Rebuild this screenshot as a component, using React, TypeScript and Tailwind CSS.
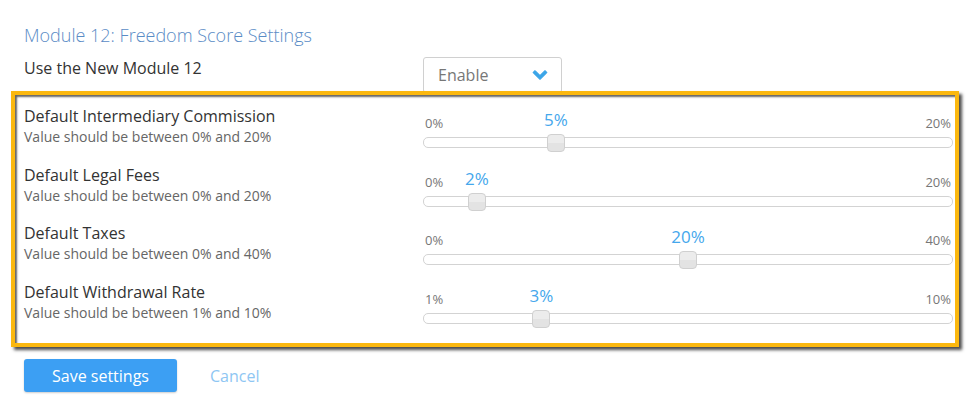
import React from "react";

type SliderRow = {
    label: string;
    min: number;
    max: number;
    value: number;
};

const rows: SliderRow[] = [
    { label: "Default Intermediary Commission", min: 0, max: 20, value: 5 },
    { label: "Default Legal Fees", min: 0, max: 20, value: 2 },
    { label: "Default Taxes", min: 0, max: 40, value: 20 },
    { label: "Default Withdrawal Rate", min: 1, max: 10, value: 3 },
];

function ChevronDown() {
    return (
        <svg width="14" height="10.5" viewBox="90 357 1612 1211" className="block overflow-visible">
            <path
                fill="#3ba5e8"
                stroke="#3ba5e8"
                strokeWidth="90"
                strokeLinejoin="round"
                d="M1683 808l-742 741q-19 19-45 19t-45-19l-742-741q-19-19-19-45.5t19-45.5l166-165q19-19 45-19t45 19l531 531 531-531q19-19 45-19t45 19l166 165q19 19 19 45.5t-19 45.5z"
            />
        </svg>
    );
}

function Slider({ min, max, value }: SliderRow) {
    const pct = ((value - min) / (max - min)) * 100;
    return (
        <div className="pt-[10px]">
            <div className="flex justify-between px-[2px] text-[13px] leading-[17px] text-[#777]">
                <span>{min}%</span>
                <span>{max}%</span>
            </div>
            <div className="relative mt-[5px] h-[11px] w-[530px] rounded-[5px] border border-[#d3d3d3] bg-white">
                <span
                    className="absolute top-[-29px] -translate-x-1/2 text-[17px] leading-[22px] text-[#45a7ec]"
                    style={{ left: `${pct}%` }}
                >
                    {value}%
                </span>
                <div
                    className="absolute top-[-4px] h-[18px] w-[18px] -translate-x-1/2 rounded-[4px] border border-[#d0d0d0] bg-[linear-gradient(#ececec_0%,#ececec_50%,#e3e3e3_50%,#e3e3e3_100%)]"
                    style={{ left: `${pct}%` }}
                />
            </div>
        </div>
    );
}

export default function App() {
    return (
        <div className="h-[410px] w-[968px] bg-white pt-[23px] font-['Open_Sans',sans-serif]">
            <h2 className="pl-[24px] text-[18px] font-light leading-[24px] text-[#5a8cc6]">Module 12: Freedom Score Settings</h2>

            <div className="mt-[10px] flex h-[34px] items-start pl-[24px]">
                <p className="w-[399px] text-[16px] leading-[22px] text-[#333]">Use the New Module 12</p>
                <div className="flex h-[36px] w-[139px] items-center justify-between rounded-[3px] border border-[#d0d0d0] bg-white pb-[1px] pl-[14px] pr-[14px]">
                    <span className="text-[16px] text-[#777]">Enable</span>
                    <ChevronDown />
                </div>
            </div>

            <div className="relative ml-[11px] w-[948px] border-[4px] border-[#fbb80f] bg-white pb-[4px] pl-[9px] pr-[2px] pt-[10px] shadow-[3px_3px_3px_rgba(0,0,0,0.7),inset_2px_2px_2px_rgba(0,0,0,0.6)]">
                {rows.map((row) => (
                    <div key={row.label} className="grid h-[58.5px] grid-cols-[399px_1fr]">
                        <div>
                            <p className="text-[16px] leading-[22px] text-[#333]">{row.label}</p>
                            <p className="text-[14px] leading-[19px] text-[#666]">
                                Value should be between {row.min}% and {row.max}%
                            </p>
                        </div>
                        <Slider {...row} />
                    </div>
                ))}
            </div>

            <div className="mt-[12px] flex items-center pl-[24px]">
                <button className="h-[33px] w-[153px] rounded-[3px] bg-[#3c9ff3] text-[16px] text-white shadow-[0_1px_2px_rgba(0,0,0,0.2)]">
                    Save settings
                </button>
                <button className="ml-[33px] text-[16px] text-[#8ec6f3]">Cancel</button>
            </div>
        </div>
    );
}
